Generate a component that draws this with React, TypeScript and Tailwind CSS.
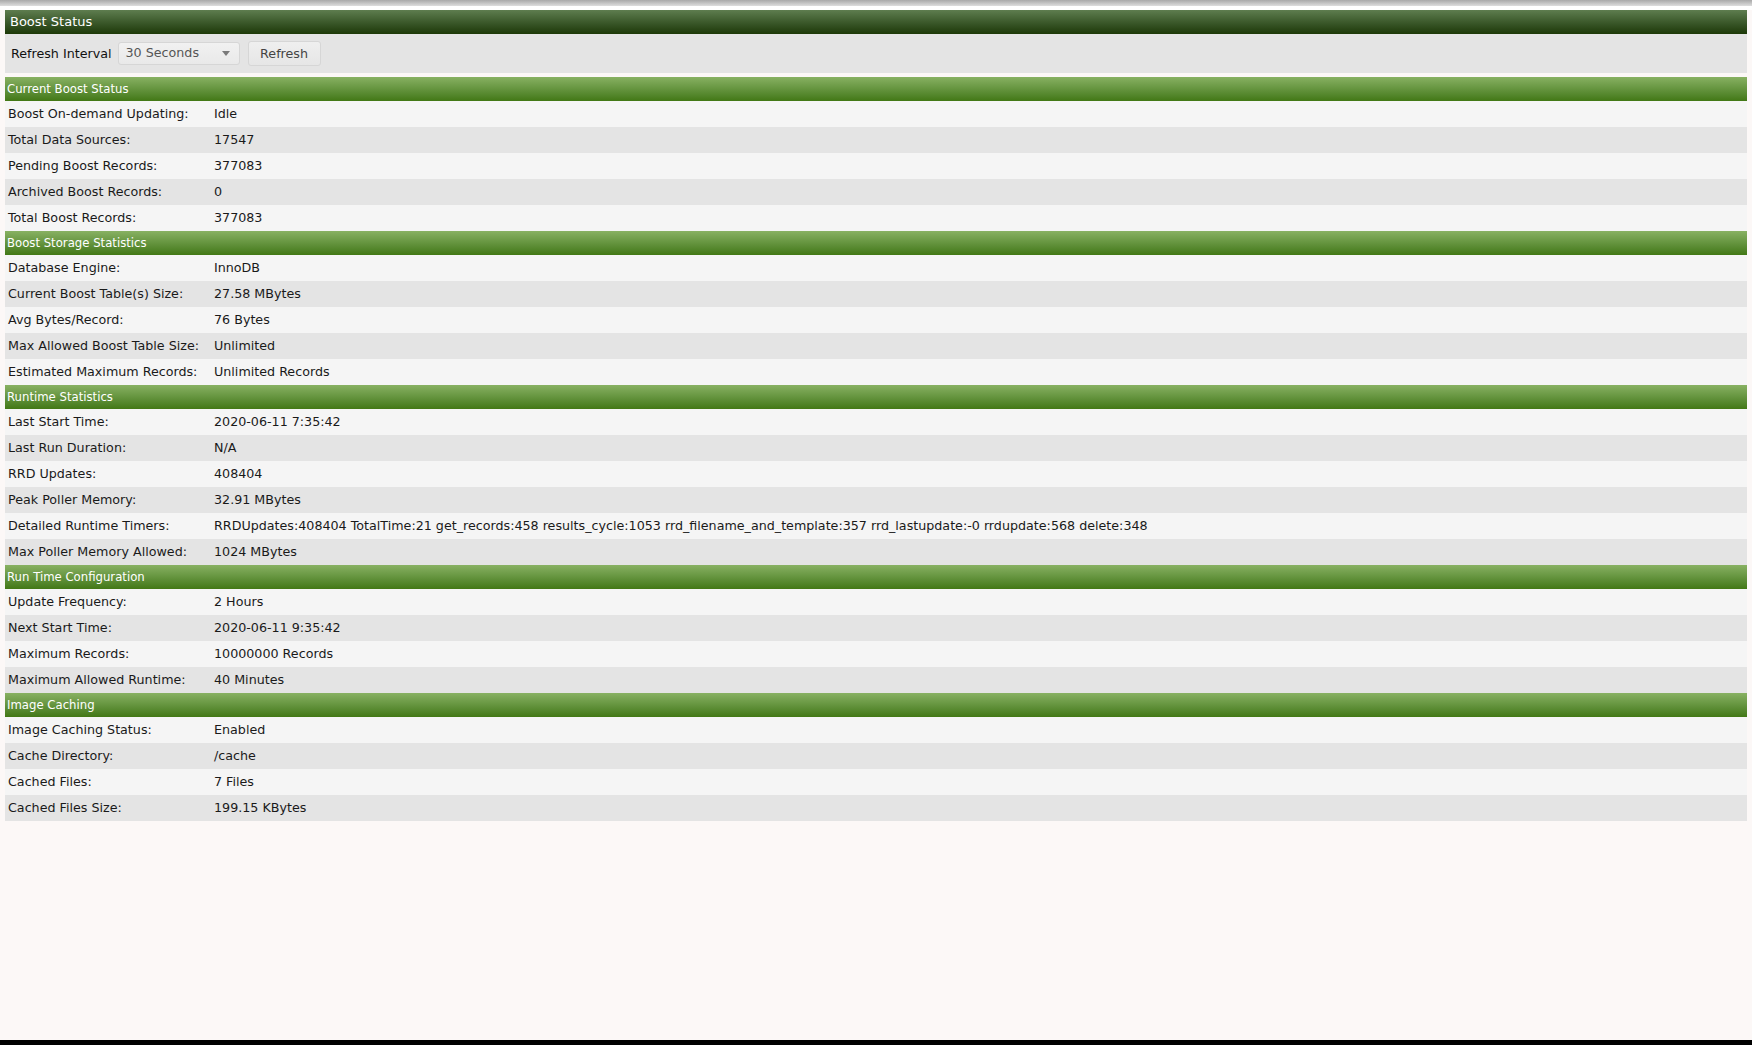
import React from "react";

type Row = [string, string];

const SECTIONS: { title: string; rows: Row[] }[] = [
  {
    title: "Current Boost Status",
    rows: [
      ["Boost On-demand Updating:", "Idle"],
      ["Total Data Sources:", "17547"],
      ["Pending Boost Records:", "377083"],
      ["Archived Boost Records:", "0"],
      ["Total Boost Records:", "377083"],
    ],
  },
  {
    title: "Boost Storage Statistics",
    rows: [
      ["Database Engine:", "InnoDB"],
      ["Current Boost Table(s) Size:", "27.58 MBytes"],
      ["Avg Bytes/Record:", "76 Bytes"],
      ["Max Allowed Boost Table Size:", "Unlimited"],
      ["Estimated Maximum Records:", "Unlimited Records"],
    ],
  },
  {
    title: "Runtime Statistics",
    rows: [
      ["Last Start Time:", "2020-06-11 7:35:42"],
      ["Last Run Duration:", "N/A"],
      ["RRD Updates:", "408404"],
      ["Peak Poller Memory:", "32.91 MBytes"],
      [
        "Detailed Runtime Timers:",
        "RRDUpdates:408404 TotalTime:21 get_records:458 results_cycle:1053 rrd_filename_and_template:357 rrd_lastupdate:-0 rrdupdate:568 delete:348",
      ],
      ["Max Poller Memory Allowed:", "1024 MBytes"],
    ],
  },
  {
    title: "Run Time Configuration",
    rows: [
      ["Update Frequency:", "2 Hours"],
      ["Next Start Time:", "2020-06-11 9:35:42"],
      ["Maximum Records:", "10000000 Records"],
      ["Maximum Allowed Runtime:", "40 Minutes"],
    ],
  },
  {
    title: "Image Caching",
    rows: [
      ["Image Caching Status:", "Enabled"],
      ["Cache Directory:", "/cache"],
      ["Cached Files:", "7 Files"],
      ["Cached Files Size:", "199.15 KBytes"],
    ],
  },
];

export default function App() {
  return (
    <div className="min-h-[1045px] flex flex-col bg-[#fcf8f7] text-[12.7px] text-[#1a1a1a] [font-family:Verdana,'DejaVu_Sans',sans-serif]">
      {/* top chrome strip */}
      <div className="h-[6px] bg-gradient-to-b from-[#a9a9a9] to-[#dedede]" />
      <div className="h-[4px] bg-white" />

      <div className="px-[5px]">
        <div className="h-[24px] flex items-center pl-[5px] text-[13px] text-white bg-gradient-to-b from-[#5e7d4f] to-[#1d3907]">
          Boost Status
        </div>

        {/* filter bar */}
        <div className="h-[39px] flex items-center bg-[#e4e4e4] pl-[6px] text-[12.7px] text-[#111]">
          <span>Refresh Interval</span>
          <div className="ml-[6px] w-[122px] h-[23px] flex items-center justify-between pl-[7px] pr-[6px] rounded-[3px] border border-[#d6d6d6] bg-gradient-to-b from-[#f1f1f1] to-[#e9e9e9] text-[#555]">
            <span className="-mt-[2px]">30 Seconds</span>
            <svg width="8" height="5" viewBox="0 0 8 5" className="mr-[3px]">
              <path d="M0 0h8L4 5z" fill="#7a7a7a" />
            </svg>
          </div>
          <button className="ml-[8px] w-[73px] h-[25px] rounded-[3px] border border-[#d6d6d6] bg-gradient-to-b from-[#efefef] to-[#e6e6e6] text-[#444]">
            Refresh
          </button>
        </div>

        <div className="h-[4px]" />

        {SECTIONS.map((section) => (
          <div key={section.title}>
            <div className="h-[24px] flex items-center pl-[2px] pt-[2px] text-[11.7px] text-white bg-gradient-to-b from-[#88b162] to-[#427814]">
              {section.title}
            </div>
            {section.rows.map(([label, value], i) => (
              <div
                key={label}
                className={`h-[26px] flex items-center ${i % 2 === 0 ? "bg-[#f5f5f5]" : "bg-[#e4e4e4]"}`}
              >
                <div className="w-[206px] shrink-0 pl-[3px]">{label}</div>
                <div className="pl-[3px] whitespace-nowrap">{value}</div>
              </div>
            ))}
          </div>
        ))}
      </div>

      <div className="flex-1" />
      <div className="h-[5px] bg-black" />
    </div>
  );
}
